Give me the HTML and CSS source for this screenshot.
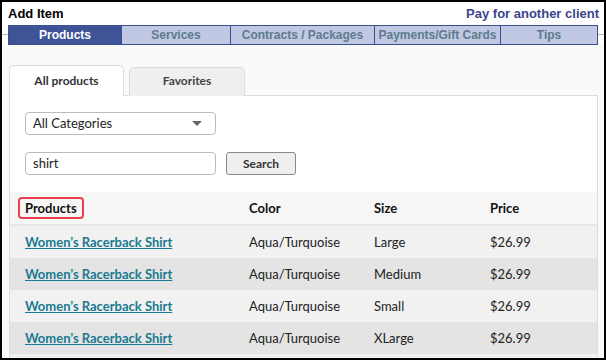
FILE: index.html
```html
<!DOCTYPE html>
<html lang="en">
<head>
    <meta charset="UTF-8">
    <title>Add Item</title>
    <link rel="stylesheet" href="styles.css">
</head>
<body>
<div class="frame">

    <div class="top">
        <h1>Add Item</h1>
        <a class="other" href="#">Pay for another client</a>
    </div>

    <div class="nav-wrap">
        <div class="nav">
            <div class="nav-tab active" style="width: 112px;">Products</div>
            <div class="nav-tab" style="width: 109px;">Services</div>
            <div class="nav-tab" style="width: 144px;">Contracts / Packages</div>
            <div class="nav-tab" style="width: 126px;">Payments/Gift Cards</div>
            <div class="nav-tab tips">Tips</div>
        </div>
    </div>

    <div class="content">
        <div class="subtabs">
            <div class="subtab current">All products</div>
            <div class="subtab">Favorites</div>
        </div>

        <div class="panel">
            <div class="select">
                <span>All Categories</span>
                <span class="caret"></span>
            </div>

            <div class="search-row">
                <div class="input">shirt</div>
                <button class="btn">Search</button>
            </div>

            <table class="items">
                <colgroup>
                    <col style="width: 239px;">
                    <col style="width: 125px;">
                    <col style="width: 116px;">
                    <col>
                </colgroup>
                <thead>
                    <tr>
                        <th><span class="mark">Products</span></th>
                        <th>Color</th>
                        <th>Size</th>
                        <th>Price</th>
                    </tr>
                </thead>
                <tbody>
                    <tr><td><a href="#">Women’s Racerback Shirt</a></td><td>Aqua/Turquoise</td><td>Large</td><td>$26.99</td></tr>
                    <tr><td><a href="#">Women’s Racerback Shirt</a></td><td>Aqua/Turquoise</td><td>Medium</td><td>$26.99</td></tr>
                    <tr><td><a href="#">Women’s Racerback Shirt</a></td><td>Aqua/Turquoise</td><td>Small</td><td>$26.99</td></tr>
                    <tr><td><a href="#">Women’s Racerback Shirt</a></td><td>Aqua/Turquoise</td><td>XLarge</td><td>$26.99</td></tr>
                    <tr><td></td><td></td><td></td><td></td></tr>
                </tbody>
            </table>
        </div>
    </div>

</div>
</body>
</html>
```

FILE: styles.css
```css
body {
    margin: 0;
    background: #fff;
    font-family: "Liberation Sans", Arial, sans-serif;
}

.frame {
    width: 602px; height: 356px;
    border: 2px solid #000;
    overflow: hidden;
    background: #fff;
}

/* Header line */
.top {
    height: 23px;
    padding: 0 5px 0 6px;
    display: flex; justify-content: space-between; align-items: center;
}
.top h1 { margin: 0; font-size: 13px; font-weight: bold; color: #000; }
.other {
    font-size: 13px; font-weight: bold; color: #3b468c;
    text-decoration: none;
}

/* Main tab bar */
.nav-wrap {
    padding: 0 6px;
    background: linear-gradient(#b5b5b5, #b5b5b5) 0 9px / 100% 1px no-repeat;
}
.nav {
    display: flex; height: 18px;
    border: 1px solid #3a4e93;
    background: #c1c8e3;
}
.nav-tab {
    box-sizing: border-box;
    border-left: 1px solid #3a4e93;
    font-size: 12px; font-weight: bold; line-height: 18px;
    text-align: center; color: #5c7b8b;
}
.nav-tab:first-child { border-left: none; }
.nav-tab.active { background: #3e5496; color: #fff; }
.nav-tab.tips { flex: 1; }

/* Content area */
.content {
    background: #fafafa;
    padding: 20px 6px 0 7px;
    height: 300px;
    font-family: Lato, "Liberation Sans", sans-serif;
    color: #222;
}

.subtabs { display: flex; gap: 5px; align-items: flex-end; }
.subtab {
    box-sizing: border-box;
    width: 116px; height: 29px;
    margin-bottom: -1px;
    border: 1px solid #ddd; border-bottom: none;
    border-radius: 5px 5px 0 0;
    background: #efefef;
    font-size: 12px; font-weight: bold; color: #444;
    text-align: center; line-height: 26px;
}
.subtab.current {
    width: 115px; height: 31px;
    background: #fff; color: #333;
    line-height: 30px;
    position: relative; z-index: 1;
}

.panel {
    border: 1px solid #ddd;
    background: #fff;
    padding-top: 16px;
}

.select, .input {
    box-sizing: border-box;
    width: 191px; height: 23px;
    margin-left: 15px;
    border: 1px solid #bbb; border-radius: 4px;
    background: #fff;
    font-size: 13px; line-height: 21px;
    padding: 0 7px;
}
.select { display: flex; justify-content: space-between; align-items: center; }
.caret {
    width: 0; height: 0; margin-right: 6px;
    border-left: 5px solid transparent; border-right: 5px solid transparent;
    border-top: 5px solid #666;
}

.search-row { display: flex; gap: 10px; margin-top: 17px; }
.btn {
    box-sizing: border-box;
    width: 70px; height: 23px; padding: 0;
    border: 1px solid #888; border-radius: 3px;
    background: #efefef;
    font-family: Lato, "Liberation Sans", sans-serif;
    font-size: 12px; font-weight: bold; color: #333;
}

/* Results table */
.items {
    width: 100%;
    margin-top: 17px;
    border-collapse: collapse;
    table-layout: fixed;
    font-size: 13px;
}
.items th {
    background: #f6f6f6;
    height: 32px; padding: 0;
    border-bottom: 2px solid #e6e6e6;
    text-align: left; font-weight: bold; color: #111;
}
.items td { height: 32px; padding: 0; color: #222; }
.items th:first-child, .items td:first-child { padding-left: 15px; }
.items tbody tr:nth-child(odd) td { background: #f1f1f1; }
.items tbody tr:nth-child(even) td { background: #e4e4e4; }
.items a { color: #1a7a91; font-weight: bold; text-decoration: underline; }

.mark {
    display: inline-block;
    margin-left: -7px;
    padding: 2px 5px;
    border: 2px solid #e8414c; border-radius: 4px;
    line-height: 14px;
}
```
